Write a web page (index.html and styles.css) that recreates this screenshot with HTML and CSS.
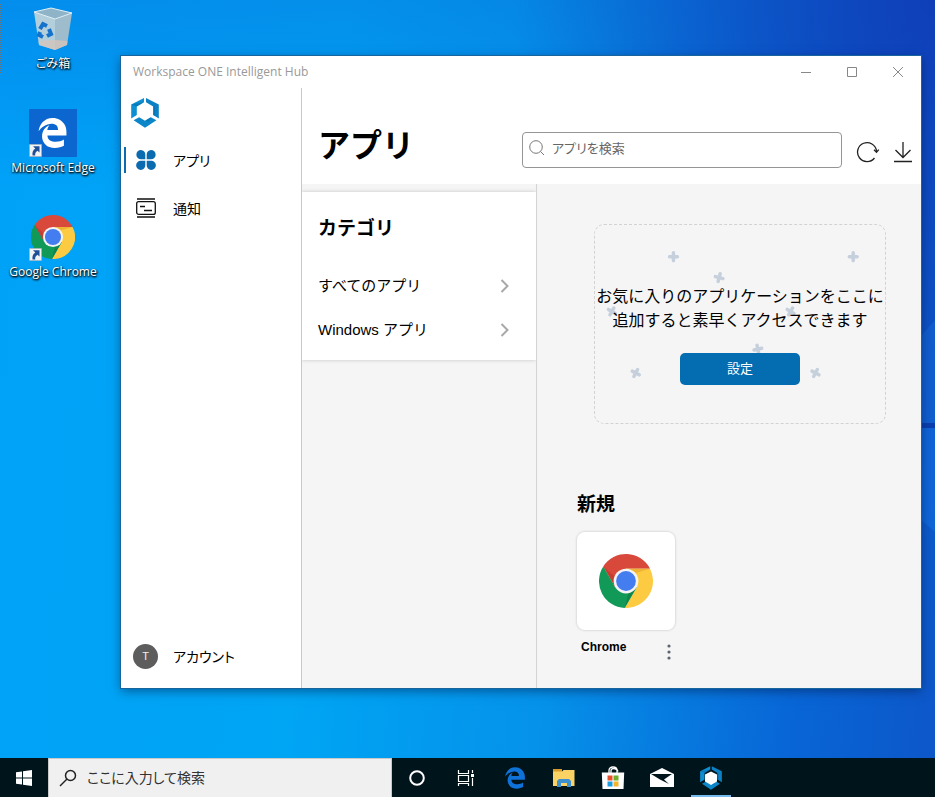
FILE: index.html
```
<!DOCTYPE html>
<html lang="ja">
<head>
<meta charset="utf-8">
<title>Workspace ONE Intelligent Hub</title>
<link rel="stylesheet" href="styles.css">
</head>
<body>

<svg class="defs" aria-hidden="true">
  <symbol id="chrome" viewBox="0 0 48 48">
    <path fill="#d8493c" d="M3.81 11.03A24 24 0 0 1 45.33 13H24V24L14.47 29.5Z"/>
    <path fill="#fdcb41" d="M45.33 13A24 24 0 0 1 22.86 48L33.53 29.5 24 24V13Z"/>
    <path fill="#119a57" d="M22.86 48A24 24 0 0 1 3.81 11.03L14.47 29.5 24 24 33.53 29.5Z"/>
    <path fill="#b8372c" opacity=".6" d="M3.81 11.03L14.47 29.5 14 20Z"/>
    <path fill="#e5a32c" opacity=".6" d="M45.33 13H24L32 17Z"/>
    <path fill="#0b7a43" opacity=".6" d="M22.86 48L33.53 29.5 26 35Z"/>
    <circle cx="24" cy="24" r="11" fill="#f4f4f4"/>
    <circle cx="24" cy="24" r="8.800" fill="#447df0"/>
  </symbol>
  <symbol id="edge" viewBox="0 0 512 512">
    <path d="M486.286 243.671c0-44.032-7.754-84.465-28.801-122.405C416.498 47.879 343.912 8.001 258.893 8.001 118.962 7.724 40.617 113.214 26.056 227.679c42.429-61.312 117.073-121.376 220.375-124.966 0 0 109.666 0 99.419 104.957H169.997c6.369-37.386 18.554-58.986 34.339-78.926-75.048 34.893-121.85 96.096-120.742 188.315.83 71.448 50.124 144.836 120.743 171.976 83.357 31.843 192.776 7.2 240.132-21.321V363.307c-80.864 56.494-270.871 60.925-272.255-67.572h314.073v-52.064z"/>
  </symbol>
  <symbol id="hub" viewBox="0 0 28 30">
    <path fill="#0d8fd1" d="M13 0V4.200L5.800 8.500V17L.2 20.500V6.500Z"/>
    <path fill="#0b82c4" d="M15 0V4.200L22.200 8.500V17L27.800 20.500V6.500Z"/>
    <path fill="#0a86c9" d="M2.600 22.300L8.200 19.200 14 22.700 19.800 19.200 25.400 22.300 14 29.800Z"/>
    <path fill="#0668a8" d="M13 4.200L5.800 8.500 .2 6.500 5 5.500ZM22.200 8.500V17L24 18V8ZM14 22.700L19.800 19.200 18 23.500Z" opacity=".5"/>
  </symbol>
  <symbol id="shortcut" viewBox="0 0 13 13">
    <path fill="#f3f3f3" stroke="#8a9bab" stroke-width=".6" d="M.3.3H12.700V12.700H.3Z"/>
    <path fill="#1f4f99" d="M4 2.200H10.500V8.500L8.500 6.800C6.600 8.300 6 9.300 6.200 11.500H3.600C2.900 8.500 4 6 6.300 4.400Z"/>
  </symbol>
  <symbol id="chevron" viewBox="0 0 9 14">
    <path fill="none" stroke="#a8a8a8" stroke-width="2" d="M1.500 1L7.500 7 1.500 13"/>
  </symbol>
  <symbol id="plus" viewBox="-6 -6 12 12">
    <path stroke="#c5d0dc" stroke-width="3.500" stroke-linecap="round" d="M-4 0H4M0-4V4"/>
  </symbol>
</svg>

<main class="desktop">
  <svg class="beams" viewBox="0 0 14 240" preserveAspectRatio="none" aria-hidden="true">
    <path fill="#1668d8" opacity=".5" d="M0 16L14 0V104H0Z"/>
    <path fill="#0a3fae" d="M0 103H14V108H0Z"/>
    <path fill="#1372e4" opacity=".5" d="M0 108H14V212L0 200Z"/>
  </svg>

  <div class="shortcuts">
    <a class="shortcut selected" href="#bin">
      <svg width="48" height="48" viewBox="0 0 48 48">
        <path fill="#8fb4c8" d="M5 7L22 3 43 8 26 14Z"/>
        <path fill="#b4cfdc" d="M5 7L26 14 26 45 10 40Z"/>
        <path fill="#9ebccb" d="M26 14L43 8 38 40 26 45Z"/>
        <path fill="#d3c4bd" opacity=".8" d="M9.500 36L26 35 26 45 10 40ZM26 35L38.500 36 38 40 26 45Z"/>
        <path fill="none" stroke="#e3eff5" d="M5 7L22 3 43 8 26 14Z"/>
        <path fill="none" stroke="#1472cc" stroke-width="4" d="M11 24L14 19 18 21M20 24L22 29 18 31M14 32L10 30 11 27"/>
      </svg>
      <span>ごみ箱</span>
    </a>
    <a class="shortcut" href="#edge">
      <svg width="48" height="48">
        <rect width="48" height="48" fill="#0b66d0"/>
        <use href="#edge" x="8" y="8" width="31" height="32" fill="#fff"/>
        <use href="#shortcut" x="0" y="35" width="13" height="13"/>
      </svg>
      <span>Microsoft Edge</span>
    </a>
    <a class="shortcut" href="#chrome-desktop">
      <svg width="48" height="48">
        <use href="#chrome" x="2" y="2" width="44" height="44"/>
        <use href="#shortcut" x="0" y="35" width="13" height="13"/>
      </svg>
      <span>Google Chrome</span>
    </a>
  </div>

  <section class="window">
    <header class="titlebar">
      <span class="title">Workspace ONE Intelligent Hub</span>
      <button type="button" aria-label="最小化"><svg width="12" height="12"><path d="M1 6.500H11"/></svg></button>
      <button type="button" aria-label="最大化"><svg width="12" height="12"><path d="M1.500 1.500H10.500V10.500H1.500Z"/></svg></button>
      <button type="button" aria-label="閉じる"><svg width="12" height="12"><path d="M1 1L11 11M11 1L1 11"/></svg></button>
    </header>

    <div class="panes">
      <nav class="sidebar">
        <svg class="logo" width="28" height="30"><use href="#hub"/></svg>
        <a class="nav-item active" href="#apps">
          <svg width="20" height="20" fill="#0b6bb0">
            <path d="M5 0A4.500 4.500 0 0 1 9.300 5V9.300H5A4.600 4.600 0 0 1 5 0ZM15 0A4.600 4.600 0 0 1 15 9.300H10.700V5A4.500 4.500 0 0 1 15 0ZM5 10.700H9.300V15A4.600 4.600 0 1 1 5 10.700ZM10.700 10.700H15A4.600 4.600 0 1 1 10.700 15Z"/>
          </svg>
          <span>アプリ</span>
        </a>
        <a class="nav-item" href="#news">
          <svg width="20" height="20" fill="none" stroke="#111" stroke-width="1.300">
            <path d="M1 1H19M1 19H19M4 8.500H9M8 12.500H16"/>
            <rect x=".7" y="3.600" width="18.600" height="12.800" rx="2"/>
          </svg>
          <span>通知</span>
        </a>
        <a class="nav-item account" href="#account">
          <b class="avatar">T</b>
          <span>アカウント</span>
        </a>
      </nav>

      <div class="main">
        <header class="page-head">
          <h1>アプリ</h1>
          <label class="search">
            <svg width="16" height="16" fill="none" stroke="#777">
              <circle cx="7" cy="7" r="6.300"/>
              <path d="M11.500 11.500L15 15"/>
            </svg>
            <input type="search" placeholder="アプリを検索" aria-label="アプリを検索">
          </label>
          <button class="tool" type="button" aria-label="更新">
            <svg width="24" height="22" fill="none" stroke="#222" stroke-width="1.300">
              <path d="M18.500 17A9.500 9.500 0 1 1 20.500 10"/>
              <path d="M18 8.800L20.500 11.200 22.800 8.600"/>
            </svg>
          </button>
          <button class="tool" type="button" aria-label="ダウンロード">
            <svg width="20" height="22" fill="none" stroke="#222" stroke-width="1.300">
              <path d="M10 1V16M2.500 9L10 16.500 17.500 9M1 20.500H19"/>
            </svg>
          </button>
        </header>

        <div class="page-body">
          <aside class="categories">
            <div class="category-card">
              <h2>カテゴリ</h2>
              <a href="#all"><span>すべてのアプリ</span><svg width="9" height="14"><use href="#chevron"/></svg></a>
              <a href="#windows"><span>Windows アプリ</span><svg width="9" height="14"><use href="#chevron"/></svg></a>
            </div>
          </aside>

          <div class="content">
            <div class="favorites">
              <svg class="confetti" viewBox="0 0 292 200" aria-hidden="true">
                <use href="#plus" x="-6" y="-6" width="12" height="12" transform="translate(79 32)"/>
                <use href="#plus" x="-6" y="-6" width="12" height="12" transform="translate(260 32)"/>
                <use href="#plus" x="-6" y="-6" width="12" height="12" transform="translate(125 53) rotate(15)"/>
                <use href="#plus" x="-6" y="-6" width="12" height="12" transform="translate(17 87) rotate(30)"/>
                <use href="#plus" x="-6" y="-6" width="12" height="12" transform="translate(197 87) rotate(30)"/>
                <use href="#plus" x="-6" y="-6" width="12" height="12" transform="translate(164 125) rotate(-12)"/>
                <use href="#plus" x="-6" y="-6" width="12" height="12" transform="translate(41 149) rotate(28)"/>
                <use href="#plus" x="-6" y="-6" width="12" height="12" transform="translate(222 149) rotate(28)"/>
              </svg>
              <p>お気に入りのアプリケーションをここに<br>追加すると素早くアクセスできます</p>
              <button type="button">設定</button>
            </div>

            <h2>新規</h2>
            <div class="app">
              <a class="tile" href="#chrome" aria-label="Chrome"><svg width="54" height="54"><use href="#chrome"/></svg></a>
              <div class="app-foot">
                <span>Chrome</span>
                <button type="button" aria-label="メニュー">
                  <svg width="4" height="16" fill="#5b6670"><circle cx="2" cy="2" r="1.600"/><circle cx="2" cy="8" r="1.600"/><circle cx="2" cy="14" r="1.600"/></svg>
                </button>
              </div>
            </div>
          </div>
        </div>
      </div>
    </div>
  </section>
</main>

<footer class="taskbar">
  <button class="start" type="button" aria-label="スタート">
    <svg width="16" height="16" fill="#fff"><path d="M0 2.200L6 1.400V7.500H0ZM7 1.200L16 0V7.500H7ZM0 8.500H6V14.600L0 13.800ZM7 8.500H16V16L7 14.800Z"/></svg>
  </button>
  <label class="task-search">
    <svg width="18" height="18" fill="none" stroke="#222" stroke-width="1.500">
      <circle cx="11.500" cy="6.500" r="5"/>
      <path d="M8 10L1 17"/>
    </svg>
    <input type="search" placeholder="ここに入力して検索" aria-label="ここに入力して検索">
  </label>
  <button type="button" aria-label="Cortana">
    <svg width="16" height="16" fill="none" stroke="#fff" stroke-width="2"><circle cx="8" cy="8" r="6.800"/></svg>
  </button>
  <button type="button" aria-label="タスク ビュー">
    <svg width="18" height="16" fill="none" stroke="#fff" stroke-width="1.200">
      <path d="M1.500 0V3.500H11.500V0M1.500 5.500H11.500V11.500H1.500ZM1.500 16V13.500H11.500V16M15.500 0V3M15.500 8V16"/>
      <path d="M14 4H17V7H14Z" fill="#fff" stroke="none"/>
    </svg>
  </button>
  <button type="button" aria-label="Microsoft Edge">
    <svg width="22" height="22" fill="#0f72d8"><use href="#edge"/></svg>
  </button>
  <button type="button" aria-label="エクスプローラー">
    <svg width="22" height="18">
      <path fill="#d99b2c" d="M0 0H9V3H0Z"/>
      <path fill="#fbd364" d="M0 2.500H9L10.500 1H21.500V17H0Z"/>
      <path fill="#3e91cf" d="M4 18V12L6 10H16L18 12V18H14V14H8V18Z"/>
    </svg>
  </button>
  <button type="button" aria-label="Microsoft Store">
    <svg width="24" height="24">
      <path fill="none" stroke="#fff" stroke-width="1.300" d="M8 7V4.500Q8 1 12 1T16 4.500V7M10 7V4.500Q10 2.500 13 2.500T17 5.500"/>
      <path fill="#fff" d="M.8 6.500H23.200L22.500 23H1.500Z"/>
      <path fill="#e8502b" d="M6.500 9.500H11.500V14.500H6.500Z"/>
      <path fill="#71b02b" d="M12.500 9.500H17.500V14.500H12.500Z"/>
      <path fill="#1b9de2" d="M6.500 15.500H11.500V20.500H6.500Z"/>
      <path fill="#f7b32b" d="M12.500 15.500H17.500V20.500H12.500Z"/>
    </svg>
  </button>
  <button type="button" aria-label="メール">
    <svg width="24" height="20">
      <path fill="#fff" d="M0 6L12 0 24 6V19H0Z"/>
      <path fill="#00141b" d="M1 6H22L14 11.500 19 16 10 11.500Z"/>
    </svg>
  </button>
  <button class="running" type="button" aria-label="Intelligent Hub">
    <svg width="22" height="24"><use href="#hub"/><path fill="#fff" d="M11 5.500L17 8.500V15.500L11 19 5 15.500V8.500Z"/></svg>
  </button>
</footer>

</body>
</html>
```
FILE: styles.css
```
* {
  box-sizing: border-box;
}

body {
  margin: 0;
  min-height: 100vh;
  display: flex;
  flex-direction: column;
  font-family: "Liberation Sans", "Noto Sans CJK JP", sans-serif;
  font-size: 15px;
  color: #000;
}

a {
  color: inherit;
  text-decoration: none;
}

button {
  border: 0;
  padding: 0;
  background: none;
  font: inherit;
  display: flex;
  align-items: center;
  justify-content: center;
}

input {
  flex: 1;
  min-width: 0;
  border: 0;
  padding: 0;
  background: none;
  outline: none;
  font: inherit;
  font-feature-settings: "palt";
}

h1, h2, p {
  margin: 0;
}

svg {
  flex: none;
  display: block;
}

.defs {
  position: absolute;
  width: 0;
  height: 0;
}

/* desktop */
.desktop {
  flex: 1;
  position: relative;
  min-height: 640px;
  padding-top: 4px;
  background:
    radial-gradient(ellipse 45% 70% at 100% 0, #0f3fb8 0, rgba(15, 63, 184, 0) 100%),
    linear-gradient(rgba(8, 110, 220, .4) 0, rgba(8, 110, 220, 0) 25%),
    linear-gradient(95deg, #00a2f8 0, #00a5f4 35%, #0592ea 60%, #0866d6 85%, #0d57c9 100%);
}

.beams {
  position: absolute;
  right: 0;
  top: 320px;
  width: 14px;
  height: 240px;
}

.shortcuts {
  width: 106px;
  display: flex;
  flex-direction: column;
  gap: 35px;
}

.shortcut {
  display: flex;
  flex-direction: column;
  align-items: center;
  gap: 3px;
  border: 1px solid transparent;
  font-family: "Open Sans", "Noto Sans CJK JP", sans-serif;
  font-size: 12px;
  line-height: 16px;
  font-feature-settings: "palt";
  white-space: nowrap;
  color: #fff;
  text-shadow: 1px 1px 2px #000, 0 1px 2px #000;
}

.selected {
  border: 1px dotted #6f7478;
}

/* hub window */
.window {
  position: absolute;
  top: 56px;
  right: 14px;
  bottom: 70px;
  left: 121px;
  display: flex;
  flex-direction: column;
  background: #fff;
  box-shadow: 0 0 0 1px #17659c, 0 3px 10px rgba(0, 20, 60, .5);
}

.titlebar {
  height: 32px;
  display: flex;
  padding-left: 12px;
}

.title {
  flex: 1;
  font-family: "Open Sans", sans-serif;
  font-size: 12px;
  line-height: 32px;
  color: #999;
}

.titlebar button {
  width: 46px;
}

.titlebar svg {
  fill: none;
  stroke: #888;
}

.panes {
  flex: 1;
  display: flex;
  min-height: 0;
}

.sidebar {
  width: 181px;
  border-right: 1px solid #c8c8c8;
  display: flex;
  flex-direction: column;
  padding: 10px 0 8px;
}

.logo {
  margin: 0 0 8px 10px;
}

.nav-item {
  position: relative;
  height: 48px;
  display: flex;
  align-items: center;
  gap: 17px;
  padding-left: 15px;
  font-size: 14px;
  font-feature-settings: "palt";
}

.active::before {
  content: "";
  position: absolute;
  left: 3px;
  top: 11px;
  width: 2px;
  height: 26px;
  background: #0b6bb0;
}

.account {
  margin-top: auto;
  padding-left: 12px;
  gap: 15px;
}

.avatar {
  width: 25px;
  height: 25px;
  border-radius: 50%;
  background: #5d5d5d;
  color: #eee;
  font-size: 11px;
  font-weight: normal;
  line-height: 25px;
  text-align: center;
}

.main {
  flex: 1;
  min-width: 0;
  display: flex;
  flex-direction: column;
}

.page-head {
  height: 96px;
  display: flex;
  align-items: center;
  padding: 28px 8px 0 16px;
}

h1 {
  flex: 1;
  font-size: 32px;
  line-height: 40px;
  margin-bottom: 8px;
}

.search {
  width: 320px;
  height: 36px;
  display: flex;
  align-items: center;
  gap: 7px;
  padding: 0 6px 4px;
  margin-right: 14px;
  border: 1px solid #959595;
  border-radius: 4px;
  font-size: 13px;
}

.search input::placeholder {
  color: #666;
}

.tool {
  height: 24px;
  margin-top: 4px;
}

.tool + .tool {
  margin-left: 13px;
}

.page-body {
  flex: 1;
  display: flex;
  background: #f5f5f5;
}

.categories {
  width: 235px;
  border-right: 1px solid #d4d4d4;
  padding-top: 8px;
}

.category-card {
  height: 168px;
  padding: 23px 27px 0 16px;
  background: #fff;
  box-shadow: 0 0 4px rgba(0, 0, 0, .2);
  clip-path: inset(-8px 0);
}

h2 {
  font-size: 19px;
  line-height: 28px;
}

.category-card h2 {
  margin-bottom: 21px;
}

.category-card a {
  height: 44px;
  display: flex;
  align-items: center;
  justify-content: space-between;
}

.category-card span {
  padding-bottom: 3px;
}

.content {
  flex: 1;
  min-width: 0;
  padding: 40px 18px 0 40px;
}

.favorites {
  position: relative;
  max-width: 292px;
  height: 200px;
  margin: 0 auto 67px;
  padding-top: 60px;
  border: 1px dashed #d2d2d2;
  border-radius: 10px;
  display: flex;
  flex-direction: column;
  align-items: center;
  font-size: 16px;
  line-height: 24px;
  text-align: center;
  white-space: nowrap;
}

.confetti {
  position: absolute;
  inset: 0;
}

.favorites p {
  position: relative;
}

.favorites button {
  position: relative;
  width: 120px;
  height: 32px;
  margin-top: 20px;
  border-radius: 5px;
  background: #046cb0;
  color: #fff;
  font-size: 13px;
}

.app {
  width: 98px;
  margin-top: 13px;
}

.tile {
  height: 98px;
  display: flex;
  align-items: center;
  justify-content: center;
  background: #fff;
  border-radius: 8px;
  box-shadow: 0 0 2px 1px rgba(0, 0, 0, .1);
}

.app-foot {
  display: flex;
  justify-content: space-between;
  padding: 9px 4px 0;
  font-size: 12px;
  font-weight: bold;
  line-height: 16px;
}

.app-foot button {
  margin-top: 5px;
}

/* taskbar */
.taskbar {
  height: 39px;
  display: flex;
  background: #00141b;
}

.taskbar button {
  width: 49px;
}

.taskbar .start {
  width: 48px;
}

.task-search {
  width: 344px;
  display: flex;
  align-items: center;
  gap: 10px;
  padding-left: 10px;
  background: #f0f0f0;
  border: 1px solid #c9c9c9;
  border-bottom: 0;
  font-size: 14px;
}

.task-search input::placeholder {
  color: #333;
}

.running {
  background: linear-gradient(#76b9ed, #76b9ed) bottom / 40px 2px no-repeat;
}
```
